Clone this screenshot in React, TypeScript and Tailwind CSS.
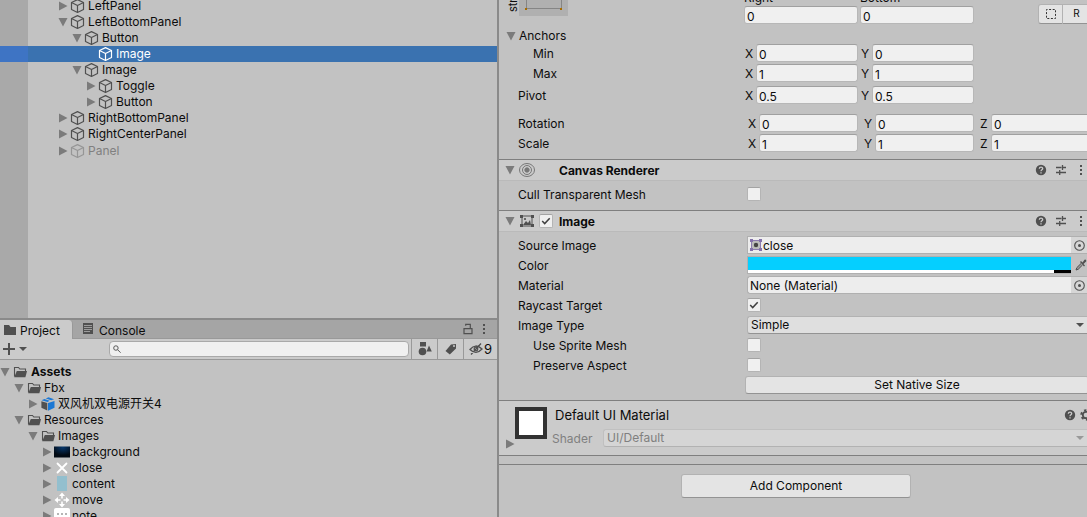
import React, { useState } from "react"

type NodeRow = { name: string; depth: number; open?: boolean; leaf?: boolean; selected?: boolean; dim?: boolean }
type AssetRow = { name: string; depth: number; open?: boolean; icon: string; bold?: boolean }

const nodes: NodeRow[] = [
  { name: "LeftPanel", depth: 0 },
  { name: "LeftBottomPanel", depth: 0, open: true },
  { name: "Button", depth: 1, open: true },
  { name: "Image", depth: 2, leaf: true, selected: true },
  { name: "Image", depth: 1, open: true },
  { name: "Toggle", depth: 2 },
  { name: "Button", depth: 2 },
  { name: "RightBottomPanel", depth: 0 },
  { name: "RightCenterPanel", depth: 0 },
  { name: "Panel", depth: 0, dim: true },
]

const assets: AssetRow[] = [
  { name: "Assets", depth: 0, open: true, icon: "folder", bold: true },
  { name: "Fbx", depth: 1, open: true, icon: "folder" },
  { name: "双风机双电源开关4", depth: 2, icon: "model" },
  { name: "Resources", depth: 1, open: true, icon: "folder" },
  { name: "Images", depth: 2, open: true, icon: "folder" },
  { name: "background", depth: 3, icon: "background" },
  { name: "close", depth: 3, icon: "close" },
  { name: "content", depth: 3, icon: "content" },
  { name: "move", depth: 3, icon: "move" },
  { name: "note", depth: 3, icon: "note" },
]

const field = "h-[18px] w-full min-w-0 rounded-[3px] border border-[#b7b7b7] border-t-[#a0a0a0] bg-[#f0f0f0] px-0.5 pt-0.5 outline-none"
const button = "rounded-[3px] border border-[#b2b2b2] border-b-[#939393] bg-[#e4e4e4]"

function Arrow({ open }: { open?: boolean }) {
  return (
    <svg className="h-2.5 w-2.5 shrink-0" viewBox="0 0 10 10" fill="#7b7b7b">
      {open ? <path d="M.5 1h9L5 9.5z" /> : <path d="M1 .5v9L9.5 5z" />}
    </svg>
  )
}

function Cube({ color }: { color: string }) {
  return (
    <svg className="h-4 w-4 shrink-0" viewBox="0 0 16 16" fill="none" stroke={color} strokeWidth="1.2" strokeLinejoin="round">
      <path d="M8.500 1.600 14.500 4.500v7L8.500 14.500l-6-3v-7zM2.500 4.500l6 3 6-3M8.500 7.500v7" />
    </svg>
  )
}

function Dots() {
  return (
    <svg className="h-3 w-3" viewBox="0 0 12 12" fill="#505050">
      <path d="M5 1h2v2H5zM5 5h2v2H5zM5 9h2v2H5z" />
    </svg>
  )
}

function Help() {
  return (
    <svg className="h-3 w-3" viewBox="0 0 12 12">
      <circle cx="6" cy="6" r="5.2" fill="#505050" />
      <path d="M4.3 4.7C4.4 2.6 7.7 2.7 7.7 4.6 7.7 5.8 6 5.8 6 7.2M6 8.2v1.3" fill="none" stroke="#cbcbcb" strokeWidth="1.3" />
    </svg>
  )
}

function Preset() {
  return (
    <svg className="h-3 w-3" viewBox="0 0 12 12" fill="none" stroke="#505050" strokeWidth="1.3">
      <path d="M1 3.5h5.5M7.5 1v5M7.5 3.5H11M1 8.5h3M4.7 6v5M4.7 8.5H11" />
    </svg>
  )
}

function Picker() {
  return (
    <svg className="h-3 w-3" viewBox="0 0 12 12" fill="none" stroke="#505050" strokeWidth="1.1">
      <circle cx="6.5" cy="6.5" r="4.8" />
      <circle cx="6.5" cy="6.5" r="1.5" fill="#505050" stroke="none" />
    </svg>
  )
}

function Caret({ color = "#505050" }: { color?: string }) {
  return (
    <svg className="h-1 w-2 shrink-0" viewBox="0 0 8 4" fill={color}>
      <path d="M0 0h8L4 4z" />
    </svg>
  )
}

function AssetIcon({ icon }: { icon: string }) {
  return (
    <svg className="h-4 w-4 shrink-0" viewBox="0 0 16 16">
      {icon === "folder" && (
        <>
          <path d="M2.5 12.5v-9h4l1.3 1.500h5.7v2" fill="none" stroke="#505050" strokeWidth="1.1" />
          <path d="M4.8 7H15l-1.6 6.200H2.2z" fill="#505050" />
        </>
      )}
      {icon === "model" && (
        <>
          <path d="M1.4 5.2 7.3 7v7.6l-5.9-2.8z" fill="#505050" />
          <path d="M8 7.1 14.5 5v6.8L8 14.8zM1.6 4.2 4.4 3l5.2 1.8-2 1.2z" fill="#1c78d4" />
          <path d="M5.8 2.5 8.5 1.3l5.6 2-3 1z" fill="#1c78d4" />
        </>
      )}
      {icon === "background" && (
        <>
          <defs>
            <radialGradient id="night" cx=".55" cy=".1" r=".7">
              <stop offset="0" stopColor="#07376b" />
              <stop offset="1" stopColor="#020a14" />
            </radialGradient>
          </defs>
          <path d="M0 2.5h16v11H0z" fill="url(#night)" />
        </>
      )}
      {icon === "close" && <path d="m3.5 3.5 9 9m0-9-9 9" stroke="#fff" strokeWidth="1.8" strokeLinecap="round" />}
      {icon === "content" && <path d="M3 0h10v15H3z" fill="#93bfce" />}
      {icon === "move" && (
        <path d="M8 .5 11 4H8.800v2.500H7.200V4H5zM8 15.500 11 12H8.800V9.500H7.200V12H5zM.5 8 4 5v2.200h2.500v1.600H4V11zM15.500 8 12 5v2.200H9.500v1.600H12V11z" fill="#fff" />
      )}
      {icon === "note" && (
        <>
          <path d="M2 0h12q2 0 2 2v12H0V2q0-2 2-2z" fill="#fff" />
          <path d="M3 5h2v2H3zM7 5h2v2H7zM11 5h2v2h-2z" fill="#b5b5b5" />
        </>
      )}
    </svg>
  )
}

function Check({ id, on }: { id: string; on?: boolean }) {
  const [checked, setChecked] = useState(!!on)
  return (
    <span className="relative block h-3.5 w-3.5 shrink-0">
      <input
        id={id}
        type="checkbox"
        aria-label={id}
        checked={checked}
        onChange={(e) => setChecked(e.target.checked)}
        className="block h-3.5 w-3.5 appearance-none rounded-[2px] border border-[#b4b4b4] border-t-[#a3a3a3] bg-[#f0f0f0]"
      />
      {checked && (
        <svg className="pointer-events-none absolute inset-0 h-3.5 w-3.5" viewBox="0 0 14 14" fill="none" stroke="#404040" strokeWidth="1.5">
          <path d="m3.2 7 2.5 2.6 5-5.4" />
        </svg>
      )}
    </span>
  )
}

function Axis({ row, axis, value, narrow }: { row: string; axis: string; value: string; narrow: boolean }) {
  const id = `${row}-${axis}`
  return (
    <div className="flex items-center">
      <label htmlFor={id} className={`shrink-0 pt-0.5 ${narrow ? "w-[11px]" : "w-3 pl-px"}`}>{axis}</label>
      <input id={id} defaultValue={value} className={field} />
    </div>
  )
}

function Vector({ name, values, indent }: { name: string; values: string[]; indent?: boolean }) {
  const three = values.length === 3
  return (
    <div className="flex h-[18px] items-center">
      <span className={`w-[245px] shrink-0 pt-0.5 ${indent ? "pl-[34px]" : "pl-[19px]"}`}>{name}</span>
      <div className={`-mr-[3px] grid flex-1 grid-cols-3 ${three ? "ml-1 gap-1.5" : "gap-0.5"}`}>
        {values.map((v, i) => <Axis key={i} row={name} axis={"XYZ"[i]} value={v} narrow={three} />)}
      </div>
    </div>
  )
}

function Prop({ name, htmlFor, indent, children }: { name: string; htmlFor: string; indent?: boolean; children: React.ReactNode }) {
  return (
    <div className="flex h-5 items-center">
      <label htmlFor={htmlFor} className={`w-[248px] shrink-0 pt-0.5 ${indent ? "pl-[34px]" : "pl-[19px]"}`}>{name}</label>
      {children}
    </div>
  )
}

function Header({ title, icon, children }: { title: string; icon: React.ReactNode; children?: React.ReactNode }) {
  return (
    <div className="flex h-[22px] items-center border-y border-t-[#7f7f7f] border-b-[#bababa] bg-[#cbcbcb] pl-1.5">
      <Arrow open />
      <span className="ml-1 w-4">{icon}</span>
      <span className="ml-1 w-5">{children}</span>
      <h2 className="flex-1 pt-px font-bold">{title}</h2>
      <div className="flex gap-2">
        <button aria-label="Help"><Help /></button>
        <button aria-label="Presets"><Preset /></button>
        <button aria-label="More"><Dots /></button>
      </div>
    </div>
  )
}

function Hierarchy() {
  return (
    <div className="min-h-0 flex-1 overflow-hidden bg-[linear-gradient(to_right,#a9a9a9_28px,#c2c2c2_28px)]">
      <ul className="-mt-0.5">
        {nodes.map((n, i) => (
          <li
            key={i}
            className={`flex h-4 items-center ${n.selected ? "bg-[linear-gradient(to_right,#3e74c4_28px,#3a72b0_28px)] text-white" : ""} ${n.dim ? "pt-px text-[#808080]" : ""}`}
          >
            <span className={n.depth === 0 ? "w-[58px]" : n.depth === 1 ? "w-[72px]" : "w-[86px]"} />
            {n.leaf ? <span className="w-2.5" /> : <Arrow open={n.open} />}
            <span className="ml-px mr-[3px]">
              <Cube color={n.selected ? "#ffffff" : n.dim ? "#969696" : "#505050"} />
            </span>
            {n.name}
          </li>
        ))}
      </ul>
    </div>
  )
}

function Project() {
  return (
    <div className="h-[199px] shrink-0 overflow-hidden border-t-2 border-[#8a8a8a]">
      <div className="flex h-[19px] items-center bg-[#a5a5a5]">
        <button className="flex h-[19px] w-[73px] items-center gap-1 rounded-tr border-r border-[#999999] bg-[#cbcbcb] pl-1">
          <svg className="h-3 w-3 shrink-0" viewBox="0 0 12 12" fill="#505050"><path d="M0 1h5l1.5 2H12v8H0z" /></svg>
          <span className="pt-[3px]">Project</span>
        </button>
        <button className="flex h-[19px] flex-1 items-center gap-[5px] border-b border-[#999999] pl-[9px]">
          <svg className="h-3 w-3" viewBox="0 0 12 12"><path d="M1 0h10v11H1z" fill="#505050" /><path d="M2 2.500h8M2 4.500h8M2 6.500h8M2 8.500h6" stroke="#a5a5a5" strokeWidth=".9" /></svg>
          <span className="pt-[3px]">Console</span>
        </button>
        <div className="flex h-[19px] items-center gap-1 border-b border-[#999999] pr-[7px]">
          <button aria-label="Lock">
            <svg className="h-3 w-3" viewBox="0 0 12 12" fill="none" stroke="#505050" strokeWidth="1.2"><path d="M2 5.6h8v5H2zM3.7 2.8V1.3h4.6v4.3" /></svg>
          </button>
          <button aria-label="More"><Dots /></button>
        </div>
      </div>
      <div className="flex h-[21px] items-center border-b border-[#999999] bg-[#cbcbcb]">
        <button aria-label="Create" className="flex w-[109px] shrink-0 items-center gap-1 pl-[3px]">
          <svg className="h-3 w-3" viewBox="0 0 12 12" stroke="#505050" strokeWidth="2"><path d="M6 0v12M0 6h12" /></svg>
          <Caret />
        </button>
        <label className="mr-0.5 flex h-4 flex-1 items-center rounded border border-[#a9a9a9] bg-[#f0f0f0] pl-[3px]">
          <svg className="h-2 w-2" viewBox="0 0 8 8" fill="none" stroke="#555"><circle cx="3" cy="3" r="2.3" /><path d="m4.8 4.8 3 3" /></svg>
          <input type="search" aria-label="Search" className="h-3 w-full outline-none" />
        </label>
        <button aria-label="Search by type" className="flex h-5 w-[26px] shrink-0 items-center justify-center border-l border-[#999999]">
          <svg className="h-3.5 w-3.5" viewBox="0 0 14 14" fill="#505050"><path d="M2 0h6v4.500H2zM8.500 9.500 11 3.500l2.800 6z" /><circle cx="4.5" cy="9.500" r="3.800" /></svg>
        </button>
        <button aria-label="Search by label" className="flex h-5 w-[26px] shrink-0 items-center justify-center border-l border-[#999999]">
          <svg className="h-3 w-3" viewBox="0 0 12 12"><path d="M6 1.5 11 1v4.5L4.8 11.5.5 8z" fill="#505050" /><circle cx="9" cy="3" r="1" fill="#cbcbcb" /></svg>
        </button>
        <button className="flex h-5 w-[34px] shrink-0 items-center justify-center gap-px border-l border-[#999999]">
          <svg className="h-3.5 w-3.5" viewBox="0 0 14 14" fill="none" stroke="#505050" strokeWidth="1.3"><path d="M1 7.5Q6.5.8 13 7 7 13.5 1 7.5zM12 1.5l-10 11" /><circle cx="7" cy="7" r="1.8" /></svg>
          <span className="pt-0.5 text-[13px]">9</span>
        </button>
      </div>
      <ul className="pt-1">
        {assets.map((a) => (
          <li key={a.name} className={`flex h-4 items-center ${a.bold ? "font-bold" : ""}`}>
            <span className={["w-0", "w-3.5", "w-7", "w-[42px]"][a.depth]} />
            <Arrow open={a.open} />
            <span className={`ml-0.5 ${a.depth === 0 ? "mr-[3px]" : "mr-0.5"}`}><AssetIcon icon={a.icon} /></span>
            {a.name}
          </li>
        ))}
      </ul>
    </div>
  )
}

function RectTransform() {
  return (
    <section className="pb-[7px]">
      <div className="flex h-6 items-end overflow-hidden">
        <span className="mb-3 ml-2 w-3 rotate-180 text-[11px] leading-3 [writing-mode:vertical-rl]">stretch</span>
        <svg className="mb-2 h-[50px] w-[49px] shrink-0" viewBox="0 0 49 50">
          <path d="M0 0h49v50H0z" fill="#b0b0b0" />
          <path d="M7.5 8.500h35v34h-35z" fill="none" stroke="#858585" />
          <path d="M6 42h2v2H6zM41 42h2v2h-2z" fill="#a86c00" />
        </svg>
        <div className="-mr-[3px] ml-44 grid flex-1 grid-cols-3 gap-0.5">
          <label className="block leading-4">Right<input defaultValue="0" className={`block ${field}`} /></label>
          <label className="block leading-4">Bottom<input defaultValue="0" className={`block ${field}`} /></label>
          <div className="flex items-end justify-end">
            <button aria-label="Blueprint mode" className="flex h-5 w-[25px] items-center justify-center rounded-l-[3px] border border-[#b2b2b2] border-b-[#939393] bg-[#e4e4e4]">
              <svg className="h-3 w-3" viewBox="0 0 12 12" fill="none" stroke="#333"><path d="M1.500 1.500h9v9h-9z" strokeDasharray="2 1.600" strokeDashoffset="1" /></svg>
            </button>
            <button className="h-5 w-[27px] border-b border-[#939393] border-t border-t-[#b2b2b2] bg-[#e4e4e4] text-[10px]">R</button>
          </div>
        </div>
      </div>
      <div className="mt-0.5 flex h-[18px] items-center gap-[3px] pl-[7px] pt-0.5"><Arrow open />Anchors</div>
      <Vector name="Min" values={["0", "0"]} indent />
      <div className="h-0.5" />
      <Vector name="Max" values={["1", "1"]} indent />
      <div className="h-1" />
      <Vector name="Pivot" values={["0.5", "0.5"]} />
      <div className="h-2.5" />
      <Vector name="Rotation" values={["0", "0", "0"]} />
      <div className="h-0.5" />
      <Vector name="Scale" values={["1", "1", "1"]} />
    </section>
  )
}

function ImageComponent() {
  return (
    <section>
      <Header
        title="Image"
        icon={
          <svg className="h-4 w-4" viewBox="0 0 16 16" fill="#505050">
            <path d="M3 3h10v10H3z" fill="none" stroke="#505050" />
            <path d="M1 2h3v3H1zM12 2h3v3h-3zM1 11h3v3H1zM12 11h3v3h-3zM4 12l3-4 2 2 2-3 1 5z" /><circle cx="6" cy="6" r="1.1" />
          </svg>
        }
      >
        <Check id="Image enabled" on />
      </Header>
      <div className="pb-[5px] pt-[3px]">
        <Prop name="Source Image" htmlFor="source">
          <div className="flex h-[18px] flex-1 items-center border border-r-0 border-[#b0b0b0] bg-[#ededed] pl-0.5">
            <svg className="h-3 w-3 shrink-0" viewBox="0 0 12 12">
              <path d="M1.500 1.500h9v9h-9z" fill="#bbb" stroke="#8d7bb0" /><circle cx="6" cy="6" r="2.200" fill="#444" />
              <path d="M0 0h3v3H0zM9 0h3v3H9zM0 9h3v3H0zM9 9h3v3H9z" fill="#8371aa" />
            </svg>
            <input id="source" readOnly value="close" className="ml-px h-4 min-w-0 flex-1 pt-0.5 outline-none" />
          </div>
          <button aria-label="Pick sprite" className="flex h-[18px] w-4 items-center justify-center border-y border-[#b0b0b0] bg-[#d6d6d6]"><Picker /></button>
        </Prop>
        <Prop name="Color" htmlFor="color">
          <button id="color" className="flex h-[18px] flex-1 flex-col border border-r-0 border-[#b0b0b0]">
            <span className="block w-full flex-1 bg-[#05cfff]" />
            <span className="flex h-[3px] w-full bg-white"><span className="ml-auto w-[17px] bg-black" /></span>
          </button>
          <button aria-label="Pick color" className="flex w-4 justify-end">
            <svg className="h-3 w-3" viewBox="0 0 12 12" fill="#505050"><path d="m5 3 1-1 1.500 1.500L9.500.7q2-.6 1.800 1.500L8.500 5 10 6.500l-1 1z" /><path d="M6 4.500 1.800 8.700 1 11l2.300-.8L7.500 6" fill="#999" stroke="#505050" /></svg>
          </button>
        </Prop>
        <Prop name="Material" htmlFor="material">
          <input id="material" readOnly value="None (Material)" className="h-[18px] min-w-0 flex-1 rounded-l-[3px] border border-r-0 border-[#b0b0b0] bg-[#ededed] px-0.5 pt-px outline-none" />
          <button aria-label="Pick material" className="flex h-[18px] w-4 items-center justify-center border-y border-[#b0b0b0] bg-[#d6d6d6]"><Picker /></button>
        </Prop>
        <Prop name="Raycast Target" htmlFor="raycast"><Check id="raycast" on /></Prop>
        <Prop name="Image Type" htmlFor="type">
          <div className="relative flex flex-1">
            <select id="type" className="h-[18px] w-full appearance-none rounded-l-[3px] border border-r-0 border-[#b2b2b2] border-b-[#939393] bg-[#dfdfdf] px-[3px] outline-none">
              <option>Simple</option>
              <option>Sliced</option>
              <option>Tiled</option>
              <option>Filled</option>
            </select>
            <span className="pointer-events-none absolute right-[3px] top-[7px]"><Caret /></span>
          </div>
        </Prop>
        <Prop name="Use Sprite Mesh" htmlFor="mesh" indent><Check id="mesh" /></Prop>
        <Prop name="Preserve Aspect" htmlFor="aspect" indent><Check id="aspect" /></Prop>
        <div className="flex h-5 items-center pl-[246px]">
          <button className={`-mr-0.5 h-[18px] flex-1 leading-4 ${button}`}>Set Native Size</button>
        </div>
      </div>
    </section>
  )
}

function Material() {
  return (
    <section className="flex h-[56px] border-y border-[#7f7f7f] bg-[#cbcbcb]">
      <button aria-label="Expand material" className="w-4 shrink-0 self-end pb-1.5 pl-1.5"><Arrow /></button>
      <span className="mt-1.5 h-8 w-8 shrink-0 border-4 border-[#323232] bg-white" />
      <div className="ml-[5px] flex-1">
        <div className="flex h-7 items-center">
          <h2 className="flex-1 pl-[3px] pt-0.5 text-[13px]">Default UI Material</h2>
          <div className="-mr-[5px] flex gap-1">
            <button aria-label="Help"><Help /></button>
            <button aria-label="Settings">
              <svg className="h-3 w-3" viewBox="0 0 12 12" fill="none" stroke="#505050"><circle cx="6" cy="6" r="3.200" strokeWidth="1.800" /><circle cx="6" cy="6" r="4.700" strokeWidth="2" strokeDasharray="2.400 2.500" /></svg>
            </button>
          </div>
        </div>
        <div className="flex h-[18px] items-center text-[#808080]">
          <label htmlFor="shader" className="w-[51px] shrink-0 pt-0.5">Shader</label>
          <div className="relative flex flex-1">
            <select id="shader" disabled className="h-[18px] w-full appearance-none rounded-l-[3px] border border-r-0 border-[#c0c0c0] border-b-[#b2b2b2] bg-[#d5d5d5] px-[3px] opacity-100">
              <option>UI/Default</option>
            </select>
            <span className="pointer-events-none absolute right-[3px] top-[7px]"><Caret color="#999999" /></span>
          </div>
        </div>
      </div>
    </section>
  )
}

export default function App() {
  return (
    <div className="grid h-screen grid-cols-[499fr_588fr] overflow-hidden bg-[#c2c2c2] font-['Inter','Noto_Sans_CJK_SC',sans-serif] text-xs text-[#0c0c0c]">
      <div className="flex min-h-0 min-w-0 flex-col border-r-2 border-[#8a8a8a]">
        <Hierarchy />
        <Project />
      </div>
      <main className="min-w-0 overflow-hidden">
        <RectTransform />
        <section>
          <Header
            title="Canvas Renderer"
            icon={
              <svg className="h-4 w-4" viewBox="0 0 16 16" fill="none" stroke="#777">
                <ellipse cx="8" cy="8" rx="7.500" ry="6.500" /><circle cx="8" cy="8" r="4.500" /><circle cx="8" cy="8" r="2.200" fill="#777" />
              </svg>
            }
          />
          <div className="pb-[6px] pt-[3px]">
            <Prop name="Cull Transparent Mesh" htmlFor="cull"><Check id="cull" /></Prop>
          </div>
        </section>
        <ImageComponent />
        <Material />
        <div className="mt-2 flex justify-center border-t border-[#7f7f7f] pl-1.5 pt-[9px]">
          <button className={`h-6 w-[230px] ${button}`}>Add Component</button>
        </div>
      </main>
    </div>
  )
}
